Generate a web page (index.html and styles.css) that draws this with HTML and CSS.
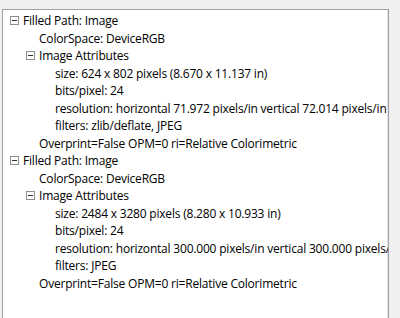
FILE: index.html
```html
<!DOCTYPE html>
<html lang="en">
<head>
    <meta charset="UTF-8">
    <meta name="viewport" content="width=device-width, initial-scale=1.0">
    <title>Path Properties</title>
    <link rel="stylesheet" href="styles.css">
</head>
<body>
    <div class="tree-panel">
        <ul class="tree">
            <li>
                <div class="row"><span class="toggle"></span>Filled Path: Image</div>
                <ul>
                    <li><div class="row leaf">ColorSpace: DeviceRGB</div></li>
                    <li>
                        <div class="row"><span class="toggle"></span>Image Attributes</div>
                        <ul>
                            <li><div class="row leaf">size: 624 x 802 pixels (8.670 x 11.137 in)</div></li>
                            <li><div class="row leaf">bits/pixel: 24</div></li>
                            <li><div class="row leaf">resolution: horizontal 71.972 pixels/in vertical 72.014 pixels/in</div></li>
                            <li><div class="row leaf">filters: zlib/deflate, JPEG</div></li>
                        </ul>
                    </li>
                    <li><div class="row leaf">Overprint=False OPM=0 ri=Relative Colorimetric</div></li>
                </ul>
            </li>
            <li>
                <div class="row"><span class="toggle"></span>Filled Path: Image</div>
                <ul>
                    <li><div class="row leaf">ColorSpace: DeviceRGB</div></li>
                    <li>
                        <div class="row"><span class="toggle"></span>Image Attributes</div>
                        <ul>
                            <li><div class="row leaf">size: 2484 x 3280 pixels (8.280 x 10.933 in)</div></li>
                            <li><div class="row leaf">bits/pixel: 24</div></li>
                            <li><div class="row leaf">resolution: horizontal 300.000 pixels/in vertical 300.000 pixels/in</div></li>
                            <li><div class="row leaf">filters: JPEG</div></li>
                        </ul>
                    </li>
                    <li><div class="row leaf">Overprint=False OPM=0 ri=Relative Colorimetric</div></li>
                </ul>
            </li>
        </ul>
    </div>
</body>
</html>
```

FILE: styles.css
```css
* {
    margin: 0;
    padding: 0;
    box-sizing: border-box;
}
body {
    background: #f0f0f0;
    font-family: 'Open Sans', 'Noto Sans', sans-serif;
    font-size: 12px;
    letter-spacing: -0.2px;
    color: #000;
    overflow: hidden;
}
.tree-panel {
    margin: 9px 0 0 2px;
    width: 387px;
    height: 330px;
    background: #fff;
    border: 1px solid #a0a0a0;
    box-shadow: inset -1px 0 0 #e4e4f2;
    overflow: hidden;
    padding-top: 2px;
}
.tree {
    list-style: none;
    padding-left: 7px;
}
.tree ul {
    list-style: none;
    padding-left: 16px;
}
.row {
    display: flex;
    align-items: center;
    height: 17.5px;
    white-space: nowrap;
}
.row.leaf {
    padding-left: 13px;
}
.toggle {
    position: relative;
    flex: none;
    width: 9px;
    height: 9px;
    margin-right: 4px;
    border: 1px solid #8e8f8f;
    background: #fff;
}
.toggle::after {
    content: '';
    position: absolute;
    left: 1px;
    top: 3px;
    width: 5px;
    height: 1px;
    background: #333;
}
```
